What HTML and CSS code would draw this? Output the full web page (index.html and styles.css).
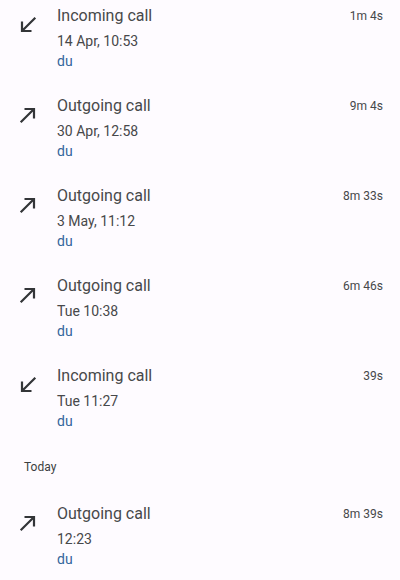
FILE: index.html
```html
<!DOCTYPE html>
<html>
<head>
    <title>Call history</title>
    <link rel="stylesheet" href="styles.css">
</head>
<body>
    <div class="history">
        <div class="call">
            <svg class="icon" viewBox="0 0 24 24"><path d="M19.3 4.7L6.5 17.5M6 8.5V18h9.5"/></svg>
            <div class="info">
                <div class="title">Incoming call</div>
                <div class="date">14 Apr, 10:53</div>
                <div class="via">du</div>
            </div>
            <div class="duration">1m 4s</div>
        </div>
        <div class="call">
            <svg class="icon" viewBox="0 0 24 24"><path d="M4.7 19.3L17.5 6.5M8.5 6H18v9.5"/></svg>
            <div class="info">
                <div class="title">Outgoing call</div>
                <div class="date">30 Apr, 12:58</div>
                <div class="via">du</div>
            </div>
            <div class="duration">9m 4s</div>
        </div>
        <div class="call">
            <svg class="icon" viewBox="0 0 24 24"><path d="M4.7 19.3L17.5 6.5M8.5 6H18v9.5"/></svg>
            <div class="info">
                <div class="title">Outgoing call</div>
                <div class="date">3 May, 11:12</div>
                <div class="via">du</div>
            </div>
            <div class="duration">8m 33s</div>
        </div>
        <div class="call">
            <svg class="icon" viewBox="0 0 24 24"><path d="M4.7 19.3L17.5 6.5M8.5 6H18v9.5"/></svg>
            <div class="info">
                <div class="title">Outgoing call</div>
                <div class="date">Tue 10:38</div>
                <div class="via">du</div>
            </div>
            <div class="duration">6m 46s</div>
        </div>
        <div class="call">
            <svg class="icon" viewBox="0 0 24 24"><path d="M19.3 4.7L6.5 17.5M6 8.5V18h9.5"/></svg>
            <div class="info">
                <div class="title">Incoming call</div>
                <div class="date">Tue 11:27</div>
                <div class="via">du</div>
            </div>
            <div class="duration">39s</div>
        </div>

        <div class="section">Today</div>

        <div class="call">
            <svg class="icon" viewBox="0 0 24 24"><path d="M4.7 19.3L17.5 6.5M8.5 6H18v9.5"/></svg>
            <div class="info">
                <div class="title">Outgoing call</div>
                <div class="date">12:23</div>
                <div class="via">du</div>
            </div>
            <div class="duration">8m 39s</div>
        </div>
    </div>
</body>
</html>
```

FILE: styles.css
```css
body {
    margin: 0;
    background-color: #fefbff;
    font-family: Roboto, "Noto Sans", sans-serif;
    color: #47484a;
    overflow: hidden;
}
.history {
    margin-top: -8px;
}
.call {
    display: flex;
    align-items: flex-start;
    height: 90px;
    box-sizing: border-box;
    padding: 12px 17px 0 16px;
}
.icon {
    width: 24px;
    height: 24px;
    margin-top: 9px;
    fill: none;
    stroke: #333538;
    stroke-width: 2.2;
    flex-shrink: 0;
}
.info {
    flex: 1;
    margin-left: 17px;
}
.title {
    font-size: 16px;
    line-height: 24px;
}
.date {
    font-size: 14px;
    line-height: 20px;
    margin-top: 3px;
}
.via {
    font-size: 14px;
    line-height: 20px;
    color: #34659b;
}
.duration {
    font-size: 12px;
    line-height: 24px;
}
.section {
    font-size: 12px;
    line-height: 16px;
    padding: 17px 24px 15px;
    color: #3c3f41;
}
```
